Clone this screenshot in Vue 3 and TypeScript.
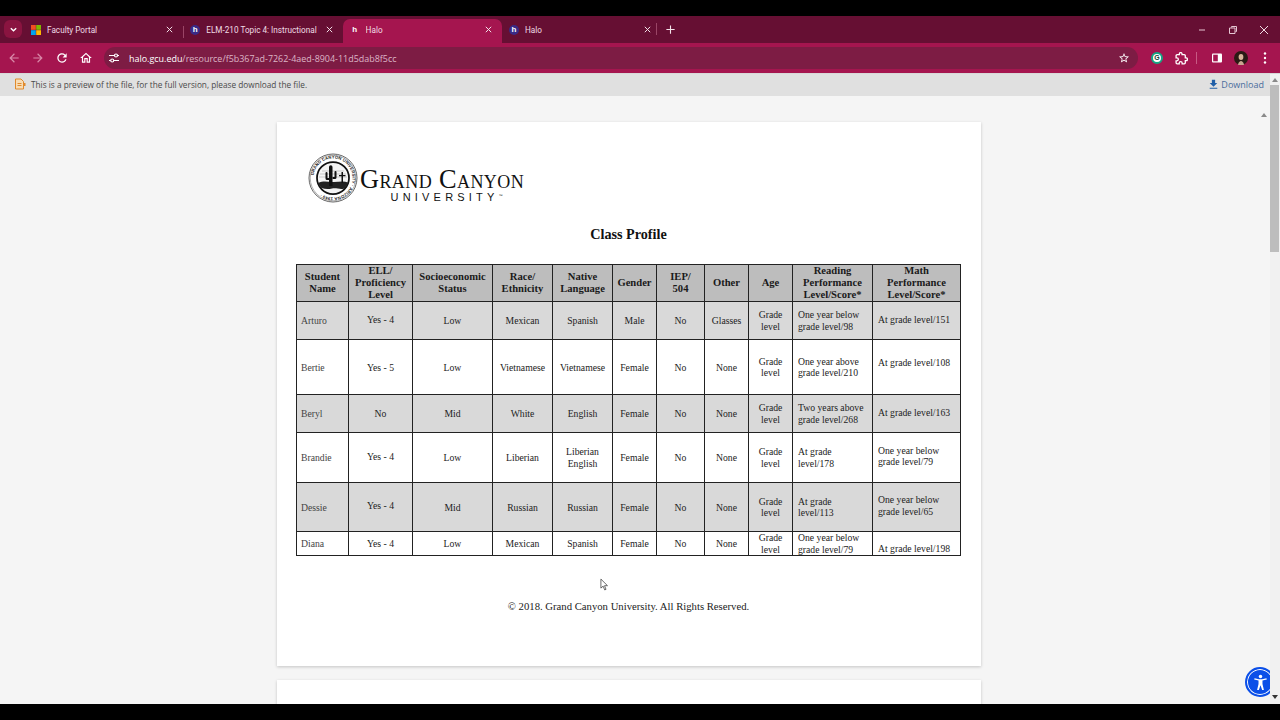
<template>
  <div class="screen">
    <div class="letterbox"></div>

    <!-- tab strip -->
    <header class="tabstrip">
      <button class="tabmenu">
        <svg viewBox="0 0 10 10" width="9" height="9"><path d="M2 3.5 5 6.5 8 3.5" fill="none" stroke="#fff" stroke-width="1.5" /></svg>
      </button>
      <div
        v-for="tab in tabs"
        :key="tab.id"
        class="tab"
        :class="{ active: tab.active, divided: tab.divided }"
      >
        <svg v-if="tab.icon === 'ms'" class="favicon" viewBox="0 0 10 10">
          <rect width="4.8" height="4.8" fill="#f25022" />
          <rect x="5.2" width="4.8" height="4.8" fill="#7fba00" />
          <rect y="5.2" width="4.8" height="4.8" fill="#00a4ef" />
          <rect x="5.2" y="5.2" width="4.8" height="4.8" fill="#ffb900" />
        </svg>
        <span v-else class="halo">h</span>
        <span class="tabtitle">{{ tab.title }}</span>
        <svg class="tabclose" viewBox="0 0 10 10" width="9" height="9"><path d="M2 2 8 8M8 2 2 8" stroke="#f3e4ea" stroke-width="1.1" /></svg>
      </div>
      <span class="newtab-sep"></span>
      <svg class="newtab" viewBox="0 0 12 12" width="11" height="11"><path d="M6 1.5v9M1.5 6h9" stroke="#f3e4ea" stroke-width="1.2" /></svg>
      <div class="winctl">
        <svg viewBox="0 0 10 10" width="10" height="10"><path d="M2 5h6" stroke="#e6c6d3" stroke-width="1" /></svg>
        <svg viewBox="0 0 10 10" width="10" height="10"><path d="M3.500 2.500V1.500h5v5h-1M1.500 3h5.500v5.500H1.500z" fill="none" stroke="#e6c6d3" stroke-width="1" /></svg>
        <svg viewBox="0 0 10 10" width="10" height="10"><path d="M1 1l8 8M9 1 1 9" stroke="#f0dbe3" stroke-width="1" /></svg>
      </div>
    </header>

    <!-- toolbar -->
    <nav class="toolbar">
      <svg class="tool dim" viewBox="0 0 24 24"><path d="M20 11H7.830l5.590-5.590L12 4l-8 8 8 8 1.410-1.410L7.830 13H20v-2z" /></svg>
      <svg class="tool dim" viewBox="0 0 24 24"><path d="M12 4l-1.410 1.410L16.170 11H4v2h12.170l-5.580 5.590L12 20l8-8z" /></svg>
      <svg class="tool" viewBox="0 0 24 24"><path d="M17.650 6.350A7.958 7.958 0 0 0 12 4c-4.420 0-7.990 3.580-7.990 8s3.570 8 7.990 8c3.730 0 6.840-2.550 7.730-6h-2.080A5.990 5.990 0 0 1 12 18c-3.310 0-6-2.690-6-6s2.690-6 6-6c1.660 0 3.140.690 4.220 1.780L13 11h7V4l-2.350 2.350z" /></svg>
      <svg class="tool" viewBox="0 0 24 24"><path d="M12 5.690l5 4.500V18h-2v-6H9v6H7v-7.810l5-4.500M12 3L2 12h3v8h6v-6h2v6h6v-8h3L12 3z" /></svg>
      <div class="omnibox">
        <svg class="tune" viewBox="0 0 12 12" width="12" height="12">
          <path d="M1 3.500h5M9.500 3.500H11M1 8.500h1.500M6 8.500h5" stroke="#fff" stroke-width="1.2" />
          <circle cx="8" cy="3.500" r="1.500" fill="none" stroke="#fff" stroke-width="1.2" />
          <circle cx="4.200" cy="8.500" r="1.500" fill="none" stroke="#fff" stroke-width="1.2" />
        </svg>
        <span class="url"><b>halo.gcu.edu</b>/resource/f5b367ad-7262-4aed-8904-11d5dab8f5cc</span>
        <svg class="star" viewBox="0 0 24 24"><path d="M22 9.240l-7.190-.620L12 2 9.190 8.630 2 9.240l5.460 4.730L5.820 21 12 17.270 18.180 21l-1.630-7.030L22 9.240zM12 15.400l-3.760 2.270 1-4.280-3.320-2.880 4.380-.380L12 6.100l1.710 4.040 4.380.380-3.320 2.880 1 4.280L12 15.400z" /></svg>
      </div>
      <div class="actions">
        <span class="grammarly">G</span>
        <svg class="ext" viewBox="0 0 24 24" width="13" height="13"><path d="M20.500 11H19V7c0-1.100-.9-2-2-2h-4V3.500a2.500 2.500 0 0 0-5 0V5H4c-1.100 0-2 .9-2 2v3.800h1.500a2.700 2.700 0 0 1 0 5.400H2V20c0 1.100.9 2 2 2h3.800v-1.500a2.700 2.700 0 0 1 5.400 0V22H17c1.100 0 2-.9 2-2v-4h1.500a2.500 2.500 0 0 0 0-5z" fill="none" stroke="#fff" stroke-width="2.400" /></svg>
        <span class="actions-sep"></span>
        <svg class="panel" viewBox="0 0 12 12" width="12" height="12">
          <rect x="1" y="1.500" width="10" height="9" rx="1" fill="#fff" />
          <rect x="2.200" y="2.700" width="4.600" height="6.600" fill="#a5154f" />
        </svg>
        <svg class="avatar" viewBox="0 0 14 14" width="14" height="14">
          <circle cx="7" cy="7" r="7" fill="#2a1a14" />
          <ellipse cx="7" cy="6" rx="2.400" ry="3" fill="#d9b49a" />
          <path d="M4 14c.5-3 1.800-4 3-4s2.500 1 3 4z" fill="#c9a590" />
        </svg>
        <svg class="kebab" viewBox="0 0 4 14" width="4" height="14">
          <circle cx="2" cy="2.500" r="1.200" fill="#fff" />
          <circle cx="2" cy="7" r="1.200" fill="#fff" />
          <circle cx="2" cy="11.500" r="1.200" fill="#fff" />
        </svg>
      </div>
    </nav>

    <div class="workarea">
      <div class="content">
        <!-- preview notice -->
        <div class="infobar">
          <svg class="fileicon" viewBox="0 0 12 12" width="12" height="12">
            <path d="M1.500 1h5.500l2.500 2.500V11h-8z" fill="#f8dcb4" stroke="#e08a2c" stroke-width="1" />
            <path d="M3.500 5.500h4M3.500 7.500h4" stroke="#e08a2c" stroke-width="1" />
            <path d="M10 5h1.500v3H10z" fill="#e08a2c" />
          </svg>
          <span class="notice">This is a preview of the file, for the full version, please download the file.</span>
          <a class="download">
            <svg viewBox="0 0 24 24" width="13" height="13"><path d="M19 9h-4V3H9v6H5l7 7 7-7zM5 18v2h14v-2H5z" fill="#1f5fa8" /></svg>
            Download
          </a>
        </div>

        <div class="viewport">
          <main class="pages">
            <section class="sheet">
              <div class="logo">
                <svg class="seal" viewBox="0 0 100 100" width="50" height="50">
                  <defs>
                    <path id="ring" d="M50 50m-39 0a39 39 0 1 1 78 0a39 39 0 1 1-78 0" />
                  </defs>
                  <circle cx="50" cy="50" r="48" fill="#fff" stroke="#333" stroke-width="1.500" />
                  <circle cx="50" cy="50" r="45.500" fill="none" stroke="#666" stroke-width="1" />
                  <text class="sealtext"><textPath href="#ring" startOffset="2%">GRAND CANYON UNIVERSITY · ARIZONA 1949 ·</textPath></text>
                  <circle cx="50" cy="50" r="32" fill="#f4f4f4" stroke="#111" stroke-width="3.500" />
                  <!-- desert floor -->
                  <path d="M20 60c10-5 18-3 28-2s22-3 32 1a30 30 0 0 1-7 12c-9 3-16-2-25 0-8 2-15 1-21-1a30 30 0 0 1-7-10z" fill="#222" />
                  <path d="M28 36h44M24 42h52M22 48h56" stroke="#999" stroke-width="1" />
                  <!-- saguaro -->
                  <path d="M42 66V28a3.500 3.500 0 0 1 7 0v38z" fill="#111" />
                  <path d="M35 40a2 2 0 0 1 4 0v10h3v4h-4a3 3 0 0 1-3-3zM53 38a2 2 0 0 1 4 0v11a3 3 0 0 1-3 3h-5v-4h4z" fill="#111" />
                  <!-- cross -->
                  <path d="M67 38h3v6h5v2.500h-5V60h-3V46.500h-5V44h5z" fill="#111" />
                </svg>
                <div class="wordmark">
                  <span class="wm-top">Grand Canyon</span>
                  <span class="wm-sub">UNIVERSITY<sup>™</sup></span>
                </div>
              </div>

              <h1 class="title">Class Profile</h1>

              <table class="profile">
                <colgroup>
                  <col v-for="(w, i) in colWidths" :key="i" :style="{ width: w + 'px' }" />
                </colgroup>
                <thead>
                  <tr class="headrow">
                    <th v-for="h in headers" :key="h">{{ h }}</th>
                  </tr>
                </thead>
                <tbody>
                  <tr
                    v-for="s in students"
                    :key="s.name"
                    :class="{ shaded: s.shaded }"
                    :style="{ height: s.height + 'px' }"
                  >
                    <td class="left name">{{ s.name }}</td>
                    <td :class="{ raised: s.ellUp }">{{ s.ell }}</td>
                    <td>{{ s.ses }}</td>
                    <td>{{ s.race }}</td>
                    <td>{{ s.lang }}</td>
                    <td>{{ s.gender }}</td>
                    <td>No</td>
                    <td>{{ s.other }}</td>
                    <td>Grade<br />level</td>
                    <td class="left">{{ s.reading }}</td>
                    <td class="left" :class="s.mathClass">{{ s.math }}</td>
                  </tr>
                </tbody>
              </table>

              <p class="copyright">© 2018. Grand Canyon University. All Rights Reserved.</p>
            </section>
            <section class="sheet next"></section>
          </main>

          <div class="inner-scroll">
            <span class="arrow-up"></span>
          </div>

          <!-- floating widgets over the page -->
          <div class="a11y">
            <span class="a11y-ring">
              <svg viewBox="0 0 24 24" width="19" height="19">
                <circle cx="12" cy="4.500" r="2.200" fill="#fff" />
                <path d="M4 8.200 9.500 9.500V14l-1.800 7.500h2.200L12 15.500l2.100 6h2.200L14.500 14V9.500L20 8.200l-.5-1.700L14 7.800h-4L4.500 6.500z" fill="#fff" />
              </svg>
            </span>
          </div>
          <svg class="pointer" viewBox="0 0 10 14" width="9" height="13">
            <path d="M1 1v10l2.500-2.200L5.200 13l1.500-.6L5 8.300h3.300z" fill="#fff" stroke="#333" stroke-width=".8" />
          </svg>
        </div>
      </div>

      <div class="outer-scroll">
        <span class="arrow-up"></span>
        <span class="thumb"></span>
        <span class="arrow-down"></span>
      </div>
    </div>

    <div class="letterbox"></div>
  </div>
</template>

<script setup lang="ts">
interface Tab {
  id: number
  title: string
  icon: 'ms' | 'halo'
  active?: boolean
  divided?: boolean
}

interface Student {
  name: string
  ell: string
  ellUp?: boolean
  ses: string
  race: string
  lang: string
  gender: string
  other: string
  reading: string
  math: string
  height: number
  shaded?: boolean
  mathClass?: string
}

const tabs: Tab[] = [
  { id: 1, title: 'Faculty Portal', icon: 'ms' },
  { id: 2, title: 'ELM-210 Topic 4: Instructional P', icon: 'halo', divided: true },
  { id: 3, title: 'Halo', icon: 'halo', active: true },
  { id: 4, title: 'Halo', icon: 'halo' }
]

const colWidths = [52, 64, 80, 60, 60, 44, 48, 44, 44, 80, 88]

const headers = [
  'Student Name',
  'ELL/ Proficiency Level',
  'Socioeconomic Status',
  'Race/ Ethnicity',
  'Native Language',
  'Gender',
  'IEP/\n504',
  'Other',
  'Age',
  'Reading Performance Level/Score*',
  'Math Performance Level/Score*'
]

const students: Student[] = [
  { name: 'Arturo', ell: 'Yes - 4', ellUp: true, ses: 'Low', race: 'Mexican', lang: 'Spanish', gender: 'Male', other: 'Glasses', reading: 'One year below\ngrade level/98', math: 'At grade level/151', height: 38, shaded: true, mathClass: 'raised' },
  { name: 'Bertie', ell: 'Yes - 5', ses: 'Low', race: 'Vietnamese', lang: 'Vietnamese', gender: 'Female', other: 'None', reading: 'One year above\ngrade level/210', math: 'At grade level/108', height: 55, mathClass: 'raised-more' },
  { name: 'Beryl', ell: 'No', ses: 'Mid', race: 'White', lang: 'English', gender: 'Female', other: 'None', reading: 'Two years above\ngrade level/268', math: 'At grade level/163', height: 38, shaded: true, mathClass: 'raised' },
  { name: 'Brandie', ell: 'Yes - 4', ellUp: true, ses: 'Low', race: 'Liberian', lang: 'Liberian\nEnglish', gender: 'Female', other: 'None', reading: 'At grade\nlevel/178', math: 'One year below\ngrade level/79', height: 50, mathClass: 'raised' },
  { name: 'Dessie', ell: 'Yes - 4', ellUp: true, ses: 'Mid', race: 'Russian', lang: 'Russian', gender: 'Female', other: 'None', reading: 'At grade\nlevel/113', math: 'One year below\ngrade level/65', height: 49, shaded: true, mathClass: 'raised' },
  { name: 'Diana', ell: 'Yes - 4', ses: 'Low', race: 'Mexican', lang: 'Spanish', gender: 'Female', other: 'None', reading: 'One year below\ngrade level/79', math: 'At grade level/198', height: 23, mathClass: 'lowered' }
]
</script>

<style>
html,
body {
  margin: 0;
  background: #000;
}
</style>

<style scoped>
.screen {
  width: 1280px;
  height: 720px;
  overflow: hidden;
  display: flex;
  flex-direction: column;
  font-family: "Open Sans", "Noto Sans", sans-serif;
  background: #000;
}
.letterbox { height: 16px; background: #000; flex: none; }

/* tab strip */
.tabstrip {
  height: 27px;
  flex: none;
  display: flex;
  align-items: flex-end;
  background: #660f33;
  color: #fff;
}
.tabmenu {
  width: 18px;
  height: 18px;
  margin: 0 2px 5px 4px;
  padding: 0;
  border: 0;
  border-radius: 6px;
  background: #8a1440;
  display: flex;
  align-items: center;
  justify-content: center;
}
.tab {
  position: relative;
  box-sizing: border-box;
  width: 159.300px;
  height: 24px;
  padding: 0 9px 3px 7px;
  display: flex;
  align-items: center;
  gap: 6px;
  font-family: Roboto, sans-serif;
  font-size: 8.200px;
  border-radius: 7px 7px 0 0;
}
.tab.active { background: #a5154f; }
.tab.divided::before {
  content: "";
  position: absolute;
  left: 0;
  top: 7px;
  height: 12px;
  width: 1px;
  background: #9a4566;
}
.favicon { width: 10px; height: 10px; flex: none; }
.halo {
  width: 10px;
  height: 10px;
  flex: none;
  border-radius: 50%;
  background: #3a2a86;
  color: #fff;
  font: bold 8px/10px "Liberation Sans", sans-serif;
  text-align: center;
}
.tab.active .halo { background: #a5154f; }
.tabtitle {
  flex: 1;
  min-width: 0;
  overflow: hidden;
  white-space: nowrap;
  color: #f0dde5;
}
.tabclose { flex: none; }
.newtab-sep {
  width: 1px;
  height: 12px;
  margin: 0 0 8px -5px;
  background: #9a4566;
}
.newtab { margin: 0 0 8px 8px; }
.winctl {
  margin: 0 11px 8px auto;
  display: flex;
  gap: 21px;
}

/* toolbar */
.toolbar {
  height: 31px;
  flex: none;
  box-sizing: border-box;
  padding-left: 7px;
  display: flex;
  align-items: center;
  background: #a5154f;
  border-bottom: 1px solid #d8d8d8;
}
.tool {
  width: 14px;
  height: 14px;
  flex: none;
  fill: #fff;
  margin-right: 10px;
}
.tool.dim { fill: #d98aa9; }
.omnibox {
  width: 1034px;
  height: 22px;
  margin-left: 1px;
  padding: 0 8px 0 4px;
  box-sizing: border-box;
  display: flex;
  align-items: center;
  gap: 9px;
  flex: none;
  border-radius: 11px;
  background: #7d1c44;
}
.tune { flex: none; }
.url {
  font-size: 8.950px;
  color: #dcb5c6;
  white-space: nowrap;
}
.url b { font-weight: 400; color: #fff; }
.star { width: 12px; height: 12px; fill: #fff; margin-left: auto; }
.actions {
  display: flex;
  align-items: center;
  margin-left: 13px;
}
.grammarly {
  width: 12px;
  height: 12px;
  border-radius: 50%;
  background: #fff;
  border: 2px solid #15a583;
  box-sizing: border-box;
  color: #143;
  font: bold 7px/8px "Liberation Sans", sans-serif;
  text-align: center;
  margin-right: 12px;
}
.ext { margin-right: 8px; flex: none; }
.actions-sep { width: 1px; height: 12px; background: #c75a84; margin-right: 14px; }
.panel { margin-right: 11px; }
.avatar { margin-right: 15px; }

/* work area: page plus the tall outer scrollbar */
.workarea {
  flex: 1;
  min-height: 0;
  display: flex;
}
.content {
  width: 1270px;
  flex: none;
  display: flex;
  flex-direction: column;
}
.infobar {
  height: 22px;
  flex: none;
  box-sizing: border-box;
  display: flex;
  align-items: center;
  padding: 0 6px 2px 14px;
  background: #e0e0e0;
}
.fileicon { margin-right: 5px; flex: none; }
.notice { font-size: 8.250px; color: #4a4a4a; white-space: nowrap; }
.download {
  margin-left: auto;
  display: flex;
  align-items: center;
  gap: 1px;
  font-size: 9px;
  color: #4a6c9c;
}

/* page area */
.viewport {
  position: relative;
  flex: 1;
  min-height: 0;
  display: flex;
  overflow: hidden;
  background: #f5f5f5;
}
.pages {
  width: 1258px;
  flex: none;
  padding-top: 26px;
  box-sizing: border-box;
  display: flex;
  flex-direction: column;
  align-items: center;
  gap: 14px;
  font-family: "Liberation Serif", serif;
  color: #222;
}
.sheet {
  width: 704px;
  height: 544px;
  flex: none;
  box-sizing: border-box;
  padding: 31px 20px 0 19px;
  background: #fff;
  box-shadow: 0 1px 3px rgba(0, 0, 0, 0.2);
}
.logo {
  margin-left: 12px;
  height: 50px;
  display: flex;
  align-items: center;
  gap: 2px;
}
.seal { flex: none; }
.sealtext { font: bold 8.500px "Liberation Sans", sans-serif; fill: #222; letter-spacing: 0.2px; }
.wordmark {
  display: flex;
  flex-direction: column;
  align-items: center;
  padding-top: 12px;
  color: #111;
}
.wm-top {
  font-size: 26.400px;
  line-height: 25px;
  font-variant: small-caps;
  white-space: nowrap;
  letter-spacing: 0.4px;
}
.wm-sub {
  padding-left: 9px;
  font: 11px/10px "Liberation Sans", sans-serif;
  letter-spacing: 4.200px;
  white-space: nowrap;
}
.wm-sub sup { font-size: 4px; letter-spacing: 0; vertical-align: 4px; line-height: 0; }
.title {
  margin: 23px 0 22px;
  font-size: 14.200px;
  line-height: 16px;
  text-align: center;
  color: #111;
}
.profile {
  width: 664px;
  table-layout: fixed;
  border-collapse: collapse;
  font-size: 9.700px;
  line-height: 11.500px;
  white-space: pre-line;
}
.profile th,
.profile td {
  padding: 0 2px;
  border: 1px solid #222;
  text-align: center;
  vertical-align: middle;
}
.profile th {
  font-size: 10.600px;
  line-height: 11.800px;
  background: #bdbdbd;
  padding: 0 3px 1px;
  color: #1a1a1a;
}
.headrow { height: 37px; }
.shaded td { background: #d9d9d9; }
.profile td.left { text-align: left; padding-left: 5px; }
.profile td.name { padding-left: 4px; color: #444; }
.profile td.raised { padding-bottom: 3px; }
.profile td.raised-more { padding-bottom: 10px; }
.profile td.lowered { padding-top: 10px; }
.copyright {
  margin: 44px 0 0;
  font-size: 10.700px;
  line-height: 13px;
  text-align: center;
}

/* scrollbars */
.inner-scroll {
  width: 12px;
  flex: none;
  position: relative;
}
.outer-scroll {
  width: 10px;
  flex: none;
  position: relative;
  background: #f1f1f1;
}
.arrow-up,
.arrow-down {
  position: absolute;
  left: 50%;
  margin-left: -3px;
  width: 0;
  height: 0;
  border-left: 3px solid transparent;
  border-right: 3px solid transparent;
}
.arrow-up { top: 17px; border-bottom: 4px solid #8a8a8a; }
.arrow-down { bottom: 5px; border-top: 4px solid #333; }
.outer-scroll .arrow-up { top: 4px; }
.thumb {
  position: absolute;
  top: 11px;
  left: 0;
  right: 1px;
  height: 167px;
  background: #bdbdbd;
}
.a11y {
  position: absolute;
  right: 0;
  top: 571px;
  width: 25px;
  height: 30px;
  overflow: hidden;
}
.a11y-ring {
  box-sizing: border-box;
  width: 30px;
  height: 30px;
  border-radius: 50%;
  background: #0b4fe8;
  border: 2px solid #0b4fe8;
  box-shadow: inset 0 0 0 1px #fff;
  display: flex;
  align-items: center;
  justify-content: center;
}
.pointer {
  position: absolute;
  left: 600px;
  top: 482px;
}
</style>
